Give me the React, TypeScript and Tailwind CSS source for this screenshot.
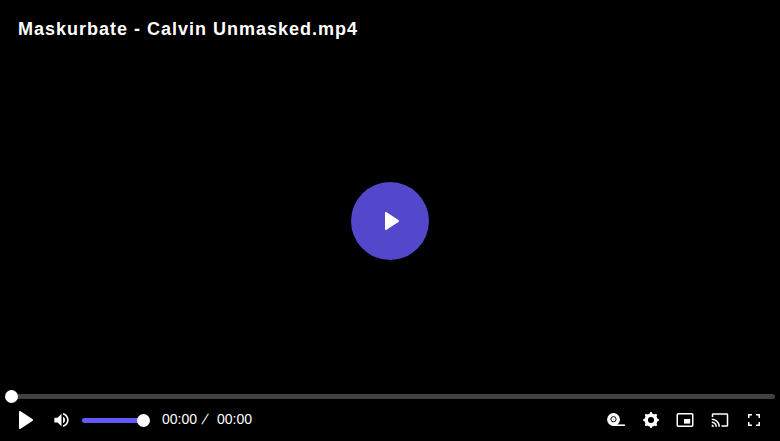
import React from 'react'

interface IconProps {
  className?: string
}

function PlayIcon({ className }: IconProps) {
  return (
    <svg viewBox="0 0 14 18" className={className} fill="currentColor" aria-hidden="true">
      <path d="M0 1C0 .1.8-.3 1.6.2L13.4 8Q14.6 9 13.4 10L1.6 17.8C.8 18.3 0 17.9 0 17Z" />
    </svg>
  )
}

function VolumeIcon({ className }: IconProps) {
  return (
    <svg viewBox="0 0 24 24" className={className} fill="currentColor" aria-hidden="true">
      <path d="M3 9v6h4l5 5V4L7 9H3zm13.5 3c0-1.77-1.02-3.29-2.5-4.03v8.05c1.48-.73 2.5-2.25 2.5-4.02zM14 3.23v2.06c2.89.86 5 3.54 5 6.71s-2.11 5.85-5 6.71v2.06c4.01-.91 7-4.49 7-8.77s-2.99-7.86-7-8.77z" />
    </svg>
  )
}

function TapeIcon({ className }: IconProps) {
  return (
    <svg viewBox="0 0 18 14" className={className} fill="none" aria-hidden="true">
      <circle cx="6.5" cy="6.5" r="6.4" fill="white" />
      <path d="M6.3 11.4h11.6V13H6.3z" fill="white" />
      <circle cx="6.5" cy="6.2" r="2.6" stroke="black" strokeWidth="1" />
      <circle cx="6.5" cy="6.2" r="0.5" fill="#888" />
    </svg>
  )
}

function GearIcon({ className }: IconProps) {
  return (
    <svg viewBox="0 0 16 16" className={className} fill="none" stroke="currentColor" aria-hidden="true">
      <circle cx="8" cy="8" r="4.8" strokeWidth="3.5" />
      <path
        d="M8 1.3V3M8 13v1.7M1.3 8H3M13 8h1.7M3.2 3.2l1 1M11.8 11.8l1 1M12.8 3.2l-1 1M4.2 11.8l-1 1"
        strokeWidth="2.5"
        strokeLinecap="round"
      />
    </svg>
  )
}

function PipIcon({ className }: IconProps) {
  return (
    <svg viewBox="0 0 18 14" className={className} fill="none" aria-hidden="true">
      <rect x="1.25" y="0.75" width="15.5" height="12.5" rx="1" stroke="white" strokeWidth="1.5" />
      <path d="M8 6h6.2v4.6H8z" fill="white" />
    </svg>
  )
}

function CastIcon({ className }: IconProps) {
  return (
    <svg viewBox="0 0 24 24" className={className} fill="currentColor" aria-hidden="true">
      <path d="M21 3H3c-1.1 0-2 .9-2 2v3h2V5h18v14h-7v2h7c1.1 0 2-.9 2-2V5c0-1.1-.9-2-2-2zM1 18v3h3c0-1.66-1.34-3-3-3zm0-4v2c2.76 0 5 2.24 5 5h2c0-3.87-3.13-7-7-7zm0-4v2c4.97 0 9 4.03 9 9h2c0-6.08-4.93-11-11-11z" />
    </svg>
  )
}

function FullscreenIcon({ className }: IconProps) {
  return (
    <svg viewBox="0 0 12 12" className={className} fill="none" aria-hidden="true">
      <path d="M4 .75H.75V4M8 .75h3.25V4M.75 8v3.25H4M8 11.25h3.25V8" stroke="white" strokeWidth="1.5" />
    </svg>
  )
}

const controlButton = 'flex h-[26px] items-center justify-center'

export default function App() {
  return (
    <div className="flex h-[441px] w-[780px] flex-col overflow-hidden bg-black font-['Liberation_Sans',Arial,sans-serif] text-white">
      <header className="h-[182px] shrink-0 px-[18px] pt-[17px]">
        <h1 className="text-[18px] leading-6 font-bold tracking-[1px]">Maskurbate - Calvin Unmasked.mp4</h1>
      </header>

      <main className="flex h-[208px] shrink-0 items-start justify-center">
        <button
          aria-label="Play video"
          className="flex size-[78px] items-center justify-center rounded-full bg-[#5347cc] pl-1"
        >
          <PlayIcon className="h-[18px] w-[14px]" />
        </button>
      </main>

      <footer className="flex flex-col">
        {/* Seek bar */}
        <div className="flex h-[13px] items-center px-[5px]">
          <div className="z-10 size-[13px] rounded-full bg-white" />
          <div className="-ml-2 h-[5px] flex-1 rounded-r-full bg-[#414141]" />
        </div>

        <div className="mt-1 flex h-[26px] items-center justify-between pr-5 pl-[19px]">
          <div className="flex items-center">
            <button aria-label="Play" className={controlButton}>
              <PlayIcon className="h-[18px] w-[14px]" />
            </button>
            <button aria-label="Mute" className={`${controlButton} ml-[19px]`}>
              <VolumeIcon className="h-5 w-[19px]" />
            </button>
            <div className="ml-[11px] flex w-[68px] items-center">
              <div className="h-[5px] flex-1 rounded-l-full bg-[#6259ff]" />
              <div className="-ml-1.5 size-[13px] rounded-full bg-white" />
            </div>
            <div className="-mt-0.5 ml-3 flex text-sm leading-[18px]">
              <span className="w-[35px]">00:00</span>
              <span className="mr-[10px] ml-[6px] inline-block w-1 -skew-x-[20deg]">/</span>
              <span>00:00</span>
            </div>
          </div>

          <div className="flex items-center">
            <button aria-label="Playback speed" className={controlButton}>
              <TapeIcon className="h-[14px] w-[18px]" />
            </button>
            <button aria-label="Settings" className={`${controlButton} ml-[18px]`}>
              <GearIcon className="size-4" />
            </button>
            <button aria-label="Picture in picture" className={`${controlButton} ml-[17px]`}>
              <PipIcon className="h-[14px] w-[18px]" />
            </button>
            <button aria-label="Cast" className={`${controlButton} ml-[17px]`}>
              <CastIcon className="size-[18px]" />
            </button>
            <button aria-label="Fullscreen" className={`${controlButton} ml-[19px]`}>
              <FullscreenIcon className="size-3" />
            </button>
          </div>
        </div>
      </footer>
    </div>
  )
}
